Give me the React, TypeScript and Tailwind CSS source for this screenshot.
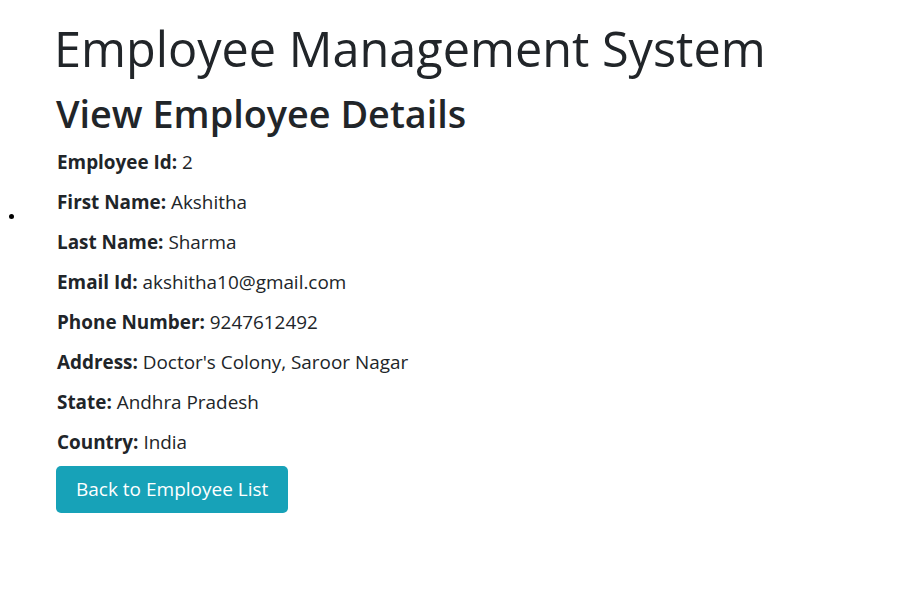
const employee = {
  id: 2,
  firstName: 'Akshitha',
  lastName: 'Sharma',
  emailId: 'akshitha10@gmail.com',
  phoneNumber: '9247612492',
  address: "Doctor's Colony, Saroor Nagar",
  state: 'Andhra Pradesh',
  country: 'India',
}

const fields: [string, string | number][] = [
  ['Employee Id', employee.id],
  ['First Name', employee.firstName],
  ['Last Name', employee.lastName],
  ['Email Id', employee.emailId],
  ['Phone Number', employee.phoneNumber],
  ['Address', employee.address],
  ['State', employee.state],
  ['Country', employee.country],
]

export default function App() {
  return (
    <div className="flex min-h-[607px] bg-white text-[#212529] font-['Open_Sans',sans-serif]">
      {/* list marker */}
      <div className="w-[57px] shrink-0">
        <div className="ml-[9px] mt-[214px] h-[5px] w-[5px] rounded-full bg-black" />
      </div>

      <div className="pt-[19px]">
        <h1 className="-ml-[3px] mb-[13px] text-[48.6px] leading-[58px] font-normal">
          Employee Management System
        </h1>
        <h2 className="-ml-px mb-[11px] text-[37.8px] leading-[47px] font-semibold">
          View Employee Details
        </h2>

        <div className="flex flex-col gap-[12px]">
          {fields.map(([label, value]) => (
            <p key={label} className="text-[18.9px] leading-[28px]">
              <strong className="font-bold">{label}:</strong> {value}
            </p>
          ))}
        </div>

        <button
          type="button"
          className="-ml-px mt-[10px] flex h-[47px] items-center rounded-[5px] bg-[#17a2b8] px-[20px] text-[19px] text-white"
        >
          Back to Employee List
        </button>
      </div>
    </div>
  )
}
